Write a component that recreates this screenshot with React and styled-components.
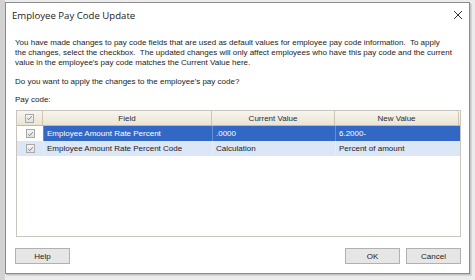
import React from 'react';
import styled, { createGlobalStyle } from 'styled-components';

const GlobalStyle = createGlobalStyle`
    html, body {
        margin: 0;
        padding: 0;
        background: #e4e4e4;
    }
    #root {
        width: 475px;
        height: 280px;
        overflow: hidden;
    }
`;

const rows = [
    { field: 'Employee Amount Rate Percent', current: '.0000', next: '6.2000-', selected: true },
    { field: 'Employee Amount Rate Percent Code', current: 'Calculation', next: 'Percent of amount', selected: false },
];

const Check = () => (
    <CheckBox>
        <svg width="8" height="8" viewBox="0 0 8 8">
            <path d="M1.5 4.2 L3.2 5.8 L6.6 2" fill="none" stroke="#7a7a7a" strokeWidth="1.1" />
        </svg>
    </CheckBox>
);

const App = () => {
    return (
        <Backdrop>
            <GlobalStyle />
            <Dialog>
                <TitleBar>
                    <Title>Employee Pay Code Update</Title>
                    <Close>
                        <svg width="10" height="10" viewBox="0 0 10 10">
                            <path d="M1 1 L9 9 M9 1 L1 9" stroke="#333" strokeWidth="1" />
                        </svg>
                    </Close>
                </TitleBar>
                <Body>
                    <Message>
                        You have made changes to pay code fields that are used as default values for employee pay code information.&nbsp; To apply<br />
                        the changes, select the checkbox.&nbsp; The updated changes will only affect employees who have this pay code and the current<br />
                        value in the employee's pay code matches the Current Value here.
                    </Message>
                    <Question>Do you want to apply the changes to the employee's pay code?</Question>
                    <Label>Pay code:</Label>
                    <Grid>
                        <HeadRow>
                            <HeadCell><Check /></HeadCell>
                            <HeadCell>Field</HeadCell>
                            <HeadCell>Current Value</HeadCell>
                            <HeadCell $last>New Value</HeadCell>
                        </HeadRow>
                        {rows.map((r) => (
                            <Row key={r.field} $selected={r.selected}>
                                <CheckCell $selected={r.selected}><Check /></CheckCell>
                                <Cell>{r.field}</Cell>
                                <Cell>{r.current}</Cell>
                                <Cell>{r.next}</Cell>
                            </Row>
                        ))}
                    </Grid>
                    <Buttons>
                        <Button>Help</Button>
                        <Spacer />
                        <Button>OK</Button>
                        <Button>Cancel</Button>
                    </Buttons>
                </Body>
            </Dialog>
        </Backdrop>
    );
};

const Backdrop = styled.div`
    width: 475px;
    height: 280px;
    box-sizing: border-box;
    padding: 2px 5px 0 5px;
    background: linear-gradient(to right, #d2d2d2 0, #d2d2d2 5px, #ececec 5px);
`;

const Dialog = styled.div`
    width: 465px;
    height: 272px;
    box-sizing: border-box;
    background: #fff;
    border: 1px solid #8c8c8c;
    box-shadow: 1px 1px 0 #c4c4c4, 2px 2px 0 #d6d6d6;
    display: flex;
    flex-direction: column;
    font-family: "Liberation Sans", Arial, sans-serif;
    color: #222;
`;

const TitleBar = styled.div`
    height: 24px;
    display: flex;
    align-items: center;
    padding: 0 0 0 6px;
`;

const Title = styled.div`
    flex: 1;
    font-family: "Open Sans", "Liberation Sans", sans-serif;
    font-size: 9.6px;
    color: #1b1b1b;
`;

const Close = styled.div`
    width: 24px;
    height: 24px;
    display: flex;
    align-items: center;
    justify-content: center;
    margin-right: -1px;
`;

const Body = styled.div`
    flex: 1;
    display: flex;
    flex-direction: column;
    padding: 11px 8px 9px 9px;
`;

const Message = styled.div`
    font-size: 8px;
    line-height: 10px;
    white-space: nowrap;
`;

const Question = styled.div`
    font-size: 8px;
    line-height: 10px;
    margin-top: 9px;
`;

const Label = styled.div`
    font-size: 8px;
    line-height: 10px;
    margin-top: 8px;
`;

const Grid = styled.div`
    margin: 5px 0 0 1px;
    height: 127px;
    box-sizing: border-box;
    border: 1px solid #c9c5bd;
    background: #fff;
    font-size: 8px;
`;

const columns = '26px 169px 123px 124px';

const HeadRow = styled.div`
    display: grid;
    grid-template-columns: ${columns};
    height: 15px;
    box-sizing: border-box;
    border-bottom: 1px solid #c2b9a4;
    background: linear-gradient(#f8f5ee, #ebe4d4);
`;

const HeadCell = styled.div`
    display: flex;
    align-items: center;
    justify-content: center;
    border-right: 1px solid #cfc6b2;
    border-top-right-radius: ${(p) => (p.$last ? '3px' : '0')};
    color: #2b2b2b;
`;

const Row = styled.div`
    display: grid;
    grid-template-columns: ${columns};
    height: 15px;
    background: ${(p) => (p.$selected ? '#3268c3' : '#dbe6f6')};
    color: ${(p) => (p.$selected ? '#fff' : '#1a1a1a')};
`;

const CheckCell = styled.div`
    display: flex;
    align-items: center;
    justify-content: center;
    background: ${(p) => (p.$selected ? '#fff' : '#dbe6f6')};
`;

const Cell = styled.div`
    display: flex;
    align-items: center;
    padding-left: 3px;
    border-left: 1px solid rgba(255, 255, 255, 0.25);
    white-space: nowrap;
    overflow: hidden;
`;

const CheckBox = styled.div`
    width: 9px;
    height: 9px;
    box-sizing: border-box;
    border: 1px solid #a9a9a9;
    background: linear-gradient(#f4f4f4, #e2e2e2);
    display: flex;
    align-items: center;
    justify-content: center;
`;

const Buttons = styled.div`
    display: flex;
    gap: 6px;
    margin-top: auto;
`;

const Spacer = styled.div`
    flex: 1;
`;

const Button = styled.div`
    width: 55px;
    height: 16px;
    box-sizing: border-box;
    border: 1px solid #b1b1b1;
    background: #e6e6e6;
    display: flex;
    align-items: center;
    justify-content: center;
    font-size: 8px;
    color: #1a1a1a;
`;

export default App;
